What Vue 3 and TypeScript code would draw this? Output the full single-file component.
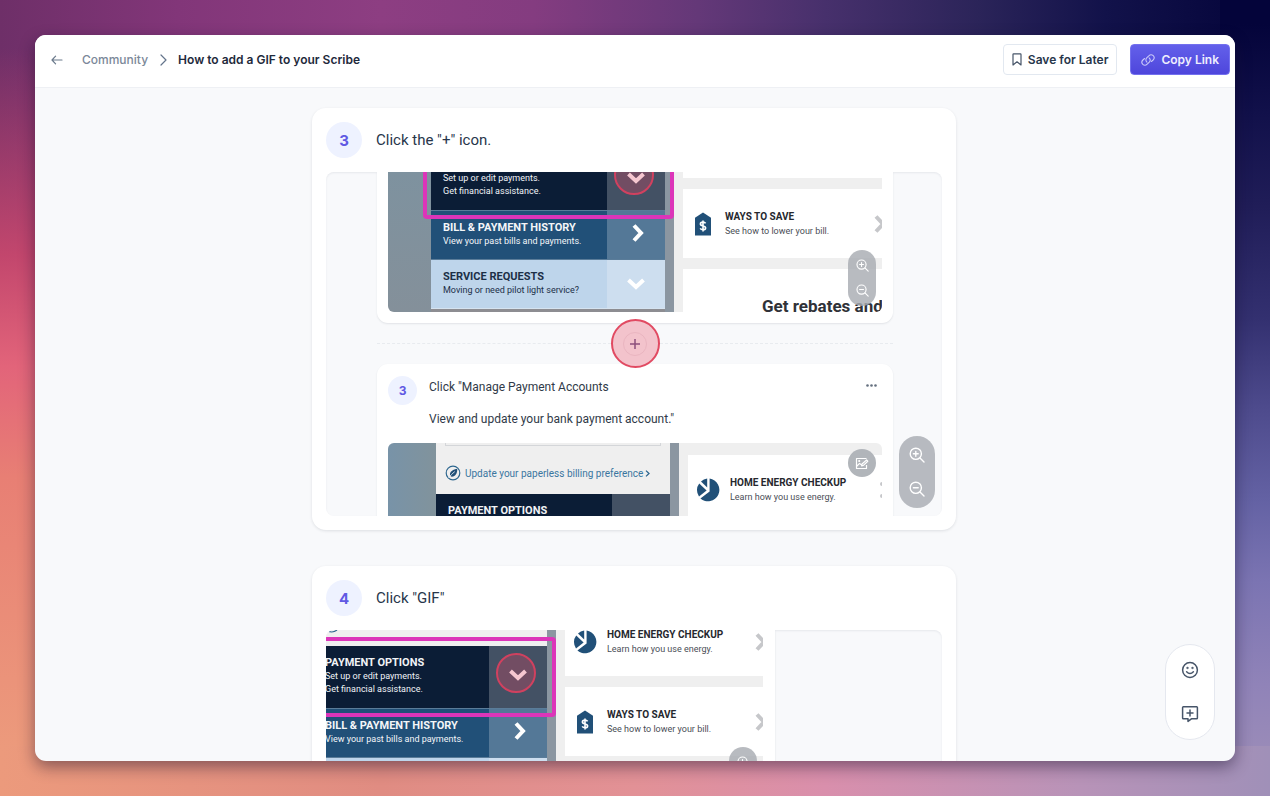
<script setup lang="ts">
interface MenuRow {
  kind: string
  title: string
  lines: string[]
  arrow: '' | 'down' | 'right'
}

interface Panel {
  icon: '' | 'pie' | 'tag'
  title: string
  text: string
}

const payment: MenuRow = {
  kind: 'payment',
  title: 'PAYMENT OPTIONS',
  lines: ['Set up or edit payments.', 'Get financial assistance.'],
  arrow: 'down',
}
const history: MenuRow = {
  kind: 'history',
  title: 'BILL & PAYMENT HISTORY',
  lines: ['View your past bills and payments.'],
  arrow: 'right',
}
const service: MenuRow = {
  kind: 'service',
  title: 'SERVICE REQUESTS',
  lines: ['Moving or need pilot light service?'],
  arrow: 'down',
}
const lowRows: MenuRow[] = [{ ...payment, title: '' }, history, service]
const midRows: MenuRow[] = [payment, history, { ...service, title: '', lines: [], arrow: '' }]

const home: Panel = { icon: 'pie', title: 'HOME ENERGY CHECKUP', text: 'Learn how you use energy.' }
const ways: Panel = { icon: 'tag', title: 'WAYS TO SAVE', text: 'See how to lower your bill.' }
</script>

<template>
  <div class="desktop">
    <div class="window">
      <svg class="defs" aria-hidden="true">
        <symbol id="zoom-in" viewBox="0 0 16 16">
          <g fill="none" stroke="currentColor" stroke-width="1.4" stroke-linecap="round">
            <circle cx="6.8" cy="6.8" r="5.6" />
            <path d="M11 11l4 4M4.4 6.8h4.8M6.8 4.4v4.8" />
          </g>
        </symbol>
        <symbol id="zoom-out" viewBox="0 0 16 16">
          <g fill="none" stroke="currentColor" stroke-width="1.4" stroke-linecap="round">
            <circle cx="6.8" cy="6.8" r="5.6" />
            <path d="M11 11l4 4M4.4 6.8h4.8" />
          </g>
        </symbol>
        <symbol id="pie" viewBox="0 0 24 24">
          <g fill="#215078">
            <path d="M13.6 .6A11.4 11.4 0 1 1 4.4 20.4L13.6 13.6z" />
            <path d="M11.2 9.6L5 3.6A11 11 0 0 1 11.2 .6z" />
            <path d="M3.2 5.4L10.6 12.4L3 18.4A11 11 0 0 1 3.2 5.4z" />
          </g>
        </symbol>
        <symbol id="tag" viewBox="0 0 24 24">
          <path d="M12 0.5L20 5.8V23.4H4V5.8z" fill="#215078" />
          <path d="M14.6 11.4C14.1 10.5 13.1 10.1 12 10.1C10.4 10.1 9.4 10.9 9.4 12C9.4 14.6 14.6 13.2 14.6 15.9C14.6 17.1 13.4 17.8 12 17.8C10.8 17.8 9.8 17.4 9.2 16.4M12 8.4V19.6" fill="none" stroke="#fff" stroke-width="1.6" />
        </symbol>
        <symbol id="down" viewBox="0 0 18 12">
          <path d="M1.5 2L9 9L16.5 2" fill="none" stroke="currentColor" stroke-width="4" />
        </symbol>
        <symbol id="right" viewBox="0 0 12 18">
          <path d="M2 1.5L9 9L2 16.5" fill="none" stroke="currentColor" stroke-width="4" />
        </symbol>
      </svg>

      <header class="bar">
        <nav class="crumbs" aria-label="Breadcrumb">
          <button class="back" type="button" aria-label="Back">
            <svg width="12" height="10" viewBox="0 0 12 10" fill="none" stroke="#6b7a8c" stroke-width="1.2" stroke-linecap="round" stroke-linejoin="round">
              <path d="M11 5H1M4.6 1.2L1 5l3.6 3.8" />
            </svg>
          </button>
          <a class="parent" href="#community">Community</a>
          <svg class="sep" width="7" height="12" viewBox="0 0 7 12" fill="none" stroke="#64748b" stroke-width="1.2" stroke-linecap="round" stroke-linejoin="round">
            <path d="M1 1l5 5-5 5" />
          </svg>
          <h1 class="title">How to add a GIF to your Scribe</h1>
        </nav>
        <div class="actions">
          <button class="action save" type="button">
            <svg width="10" height="13" viewBox="0 0 10 13" fill="none" stroke="#475569" stroke-width="1.2" stroke-linejoin="round">
              <path d="M1 1.2Q1 .8 1.6 .8H8.4Q9 .8 9 1.4V12L5 8.8L1 12z" />
            </svg>
            Save for Later
          </button>
          <button class="action copy" type="button">
            <svg width="14" height="12" viewBox="0 0 14 12" fill="none" stroke="#c9c8f8" stroke-width="1.1" stroke-linecap="round">
              <path d="M5.9 8.2C4.6 7 4.5 5.2 5.7 3.9L7.8 1.9C9.1.6 11 .6 12.2 1.7C13.4 2.9 13.4 4.7 12.1 6L10.4 7.5" />
              <path d="M8.1 3.8C9.4 5 9.5 6.8 8.3 8.1L6.2 10.1C4.9 11.4 3 11.4 1.8 10.3C.6 9.1.6 7.3 1.9 6L3.6 4.5" />
            </svg>
            Copy Link
          </button>
        </div>
      </header>

      <main class="content">
        <article class="card">
          <div class="step">
            <span class="number">3</span>
            <p class="label">Click the "+" icon.</p>
          </div>

          <div class="shot first">
            <section class="inner top">
              <div class="scene low">
                <div class="side"></div>
                <div class="menu">
                  <div v-for="row in lowRows" :key="row.kind" class="row" :class="[row.kind, { cut: !row.title }]">
                    <div class="words">
                      <strong v-if="row.title">{{ row.title }}</strong>
                      <span v-for="line in row.lines" :key="line">{{ line }}</span>
                    </div>
                    <div class="arrow" :class="row.arrow">
                      <svg><use :href="'#' + row.arrow" /></svg>
                      <i v-if="row.kind === 'payment'" class="target"></i>
                    </div>
                    <i v-if="row.kind === 'payment'" class="frame"></i>
                  </div>
                </div>
                <div class="edge"></div>
                <div class="panels">
                  <div class="panel sliver"></div>
                  <div class="panel">
                    <svg class="mark"><use href="#tag" /></svg>
                    <div class="facts">
                      <strong>{{ ways.title }}</strong>
                      <span>{{ ways.text }}</span>
                    </div>
                    <svg class="next"><use href="#right" /></svg>
                  </div>
                  <div class="rebates">Get rebates and</div>
                </div>
                <div class="pill small">
                  <button type="button" aria-label="Zoom in picture"><svg><use href="#zoom-in" /></svg></button>
                  <button type="button" aria-label="Zoom out picture"><svg><use href="#zoom-out" /></svg></button>
                </div>
              </div>
            </section>

            <div class="divider">
              <button class="add" type="button" aria-label="Add step">
                <svg width="26" height="26" viewBox="0 0 26 26" fill="none">
                  <circle cx="13" cy="13" r="11.5" stroke="#eab5c0" stroke-width="1" />
                  <path d="M8 13h10M13 8v10" stroke="#8d4f7c" stroke-width="1.5" />
                </svg>
              </button>
            </div>

            <section class="inner bottom">
              <div class="substep">
                <span class="number little">3</span>
                <div class="text">
                  <p>Click "Manage Payment Accounts</p>
                  <p>View and update your bank payment account."</p>
                </div>
                <button class="more" type="button" aria-label="More">
                  <svg width="11" height="3" viewBox="0 0 11 3" fill="#64707f">
                    <circle cx="1.5" cy="1.5" r="1.3" /><circle cx="5.5" cy="1.5" r="1.3" /><circle cx="9.5" cy="1.5" r="1.3" />
                  </svg>
                </button>
              </div>
              <div class="scene high">
                <div class="side"></div>
                <div class="menu">
                  <div class="paperless">
                    <div class="box"></div>
                    <a href="#paperless">
                      <svg width="16" height="16" viewBox="0 0 16 16">
                        <circle cx="8" cy="8" r="6.8" fill="none" stroke="#2e678f" stroke-width="1.2" />
                        <path d="M12.2 3.8C12.4 8.6 10.4 12 6 11.6C3.2 9 6 4.6 12.2 3.8z" fill="#215078" />
                        <path d="M3.6 13C5.2 10.8 7.2 8.6 9.8 6.6" fill="none" stroke="#dfe6ec" stroke-width=".9" />
                      </svg>
                      <span>Update your paperless billing preference</span>
                      <svg class="go" width="5" height="7" viewBox="0 0 5 7" fill="none" stroke="#2e678f" stroke-width="1.3"><path d="M1 .6L4 3.5L1 6.4" /></svg>
                    </a>
                  </div>
                  <div class="row payment last">
                    <div class="words"><strong>{{ payment.title }}</strong></div>
                    <div class="arrow"></div>
                  </div>
                </div>
                <div class="edge"></div>
                <div class="panels">
                  <div class="panel">
                    <svg class="mark"><use href="#pie" /></svg>
                    <div class="facts">
                      <strong>{{ home.title }}</strong>
                      <span>{{ home.text }}</span>
                    </div>
                    <svg class="hint" width="3" height="18" viewBox="0 0 3 18" fill="#c6c7ca">
                      <circle cx="3" cy="3" r="2" /><circle cx="3" cy="15" r="2" />
                    </svg>
                  </div>
                </div>
                <button class="edit" type="button" aria-label="Edit picture">
                  <svg width="14" height="13" viewBox="0 0 14 13" fill="none" stroke="#fff" stroke-width="1.2" stroke-linejoin="round">
                    <path d="M11.5 1.5H1.5V11.5H11.5V8M2 9L4.6 6.4L7 8.2" />
                    <path d="M6.6 8.8L7 7L11.6 3L12.8 4.2L8.4 8.4z" />
                    <circle cx="4.2" cy="4" r=".5" />
                  </svg>
                </button>
              </div>
            </section>

            <div class="pill large">
              <button type="button" aria-label="Zoom in"><svg><use href="#zoom-in" /></svg></button>
              <button type="button" aria-label="Zoom out"><svg><use href="#zoom-out" /></svg></button>
            </div>
          </div>
        </article>

        <article class="card">
          <div class="step">
            <span class="number">4</span>
            <p class="label">Click "GIF"</p>
          </div>

          <div class="shot second">
            <section class="inner wide">
              <div class="scene mid">
                <div class="menu">
                  <div class="strip">
                    <svg width="12" height="4" viewBox="0 0 12 4"><path d="M0 0Q6 4 11 0" fill="none" stroke="#2e678f" stroke-width="1.2" /></svg>
                  </div>
                  <div v-for="row in midRows" :key="row.kind" class="row" :class="row.kind">
                    <div class="words">
                      <strong v-if="row.title">{{ row.title }}</strong>
                      <span v-for="line in row.lines" :key="line">{{ line }}</span>
                    </div>
                    <div class="arrow" :class="row.arrow">
                      <svg v-if="row.arrow"><use :href="'#' + row.arrow" /></svg>
                      <i v-if="row.kind === 'payment'" class="target"></i>
                    </div>
                    <i v-if="row.kind === 'payment'" class="frame"></i>
                  </div>
                </div>
                <div class="edge"></div>
                <div class="panels">
                  <div v-for="panel in [home, ways]" :key="panel.icon" class="panel">
                    <svg class="mark"><use :href="'#' + panel.icon" /></svg>
                    <div class="facts">
                      <strong>{{ panel.title }}</strong>
                      <span>{{ panel.text }}</span>
                    </div>
                    <svg class="next"><use href="#right" /></svg>
                  </div>
                </div>
                <div class="pill small">
                  <button type="button" aria-label="Zoom in picture"><svg><use href="#zoom-in" /></svg></button>
                </div>
              </div>
            </section>
          </div>
        </article>
      </main>

      <aside class="feedback">
        <button type="button" aria-label="React">
          <svg width="18" height="18" viewBox="0 0 18 18" fill="none" stroke="#475569" stroke-width="1.5" stroke-linecap="round">
            <circle cx="9" cy="9" r="7.4" />
            <path d="M5.6 10.8Q9 14.4 12.4 10.8" />
            <circle cx="6.5" cy="7" r=".4" /><circle cx="11.5" cy="7" r=".4" />
          </svg>
        </button>
        <button type="button" aria-label="Comment">
          <svg width="18" height="18" viewBox="0 0 18 18" fill="none" stroke="#475569" stroke-width="1.5" stroke-linecap="round" stroke-linejoin="round">
            <path d="M2.4 1.8H15.6Q16.4 1.8 16.4 2.6V13Q16.4 13.8 15.6 13.8H10.4L7 16.4V13.8H2.4Q1.6 13.8 1.6 13V2.6Q1.6 1.8 2.4 1.8z" />
            <path d="M6 8h6M9 5v6" />
          </svg>
        </button>
      </aside>
    </div>
  </div>
</template>

<style>
body {
  margin: 0;
}
</style>

<style scoped>
* {
  box-sizing: border-box;
}
button {
  margin: 0;
  padding: 0;
  border: 0;
  background: none;
  font: inherit;
  color: inherit;
  display: flex;
  align-items: center;
  justify-content: center;
}
p,
h1 {
  margin: 0;
}
.defs {
  display: none;
}
.desktop {
  height: 100vh;
  padding: 35px;
  font-family: Inter, "Liberation Sans", sans-serif;
  background:
    linear-gradient(to right, #ec9a7c, #e08c82 30%, #e29196 50%, #d98fac 65%, #b893b8 85%, #a090b8) bottom / 100% 50px no-repeat,
    linear-gradient(to bottom, transparent 6%, rgba(215, 76, 110, 0.8) 32%, #e2647a 46%, #e87f74 60%, #ec9a7c 94%) left / 50px 100% no-repeat,
    linear-gradient(to bottom, #04043a 3%, #11104a 14%, #201d58 26%, #333070 40%, #4d4a8c 51%, #6462a4 63%, #7b74b2 73%, #9083b8 86%, #a090b8) right / 50px 100% no-repeat,
    linear-gradient(to right, #6e2f68, #823679 14%, #8d3e82 30%, #843c80 42%, #643878 55%, #47306c 65%, #2b2459 77%, #12124a 87%, #04043a);
}
.window {
  position: relative;
  display: flex;
  flex-direction: column;
  height: 100%;
  overflow: hidden;
  border-radius: 11px;
  background: #f8f9fb;
  box-shadow: 0 6px 16px rgba(20, 10, 40, 0.45);
}
.bar {
  flex: none;
  display: flex;
  justify-content: space-between;
  height: 53px;
  padding: 9px 5px 0 16px;
  background: #fff;
  border-bottom: 1px solid #eef0f4;
}
.crumbs {
  display: flex;
  align-items: center;
  height: 31px;
  font-size: 12px;
}
.back {
  width: 12px;
  margin-right: 19px;
}
.parent {
  font-weight: 500;
  color: #7b8899;
  text-decoration: none;
}
.sep {
  margin: 0 11px 0 12px;
}
.title {
  font-size: 12px;
  font-weight: 600;
  color: #1e293b;
}
.actions {
  display: flex;
  gap: 13px;
}
.action {
  height: 31px;
  gap: 6px;
  border: 1px solid #e2e8f0;
  border-radius: 4px;
  padding: 0 8px;
  font-size: 12px;
  font-weight: 600;
  color: #27364b;
  background: #fff;
}
.copy {
  padding: 0 10px;
  border-color: #7370ee;
  color: #eeeefe;
  background: linear-gradient(#6360ea, #4e46dc);
}
.content {
  flex: 1;
  min-height: 0;
  overflow: hidden;
  display: flex;
  flex-direction: column;
  align-items: center;
  gap: 36px;
  padding: 20px 2px 0 0;
}
.card {
  flex: none;
  width: 100%;
  max-width: 644px;
  padding: 14px;
  border-radius: 14px;
  background: #fff;
  box-shadow: 0 1px 3px rgba(30, 41, 59, 0.12);
}
.step {
  display: flex;
  align-items: center;
  gap: 14px;
  height: 36px;
  margin-bottom: 14px;
}
.number {
  flex: none;
  display: flex;
  align-items: center;
  justify-content: center;
  width: 36px;
  height: 36px;
  border-radius: 50%;
  background: #eef2ff;
  color: #6159e3;
  font-size: 15px;
  font-weight: 700;
}
.label {
  font-family: Roboto, "Liberation Sans", sans-serif;
  font-size: 15px;
  color: #27364b;
}
.shot {
  position: relative;
  height: 344px;
  overflow: hidden;
  border-radius: 8px;
  background: #f8f9fb;
  box-shadow: inset 0 1px 2px rgba(30, 41, 59, 0.08);
}
.first {
  padding: 0 49px 0 51px;
}
.inner {
  background: #fff;
  padding: 0 11px;
  box-shadow: 0 1px 2px rgba(30, 41, 59, 0.1);
}
.top {
  padding-bottom: 11px;
  border-radius: 0 0 11px 11px;
}
.bottom {
  border-radius: 11px 11px 0 0;
}
.scene {
  position: relative;
  display: flex;
  overflow: hidden;
  font-family: Roboto, "Liberation Sans", sans-serif;
  background: #efefef;
}
.low {
  height: 140px;
  border-radius: 0 0 6px 6px;
}
.high {
  height: 73px;
  border-radius: 6px 6px 0 0;
}
.mid {
  height: 131px;
}
.side {
  flex: none;
  width: 43px;
  background: linear-gradient(#7e929f, #84909a);
}
.high .side {
  width: 48px;
  background: linear-gradient(to right, #7893a8, #81939c);
}
.menu {
  flex: none;
  width: 234px;
}
.low .menu {
  background: #8d8d92;
}
.edge {
  flex: none;
  width: 9px;
  background: #8b96a1;
}
.row {
  position: relative;
  display: flex;
  height: 49px;
  border-bottom: 1px solid #5a7c99;
}
.payment {
  height: 63px;
  background: #0b1d36;
  color: #f1f3f6;
}
.payment.cut {
  height: 39px;
}
.payment.last {
  height: 22px;
  border: 0;
}
.history {
  background: #215078;
  color: #f4f6f8;
}
.service {
  background: #bed5eb;
  color: #1c2f47;
  border-color: #d5e3f0;
}
.words {
  flex: 1;
  padding: 10px 0 0 12px;
  white-space: nowrap;
}
.cut .words {
  padding-top: 0;
}
.words strong,
.words span,
.facts strong,
.facts span {
  display: block;
}
.words strong {
  font-size: 11px;
  line-height: 14px;
  font-weight: 700;
}
.words span {
  font-size: 9px;
  line-height: 13px;
}
.arrow {
  position: relative;
  width: 58px;
  display: flex;
  align-items: center;
  justify-content: center;
  color: #fff;
  background: rgba(255, 255, 255, 0.23);
}
.arrow svg {
  width: 18px;
  height: 12px;
}
.arrow.right {
  padding: 0 0 4px 4px;
}
.arrow.right svg {
  width: 12px;
  height: 18px;
}
.payment .arrow {
  padding-bottom: 4px;
}
.payment.cut .arrow {
  align-items: flex-start;
}
.target {
  position: absolute;
  left: 7px;
  top: 7px;
  width: 40px;
  height: 40px;
  border: 2px solid #d0415f;
  border-radius: 50%;
  background: rgba(225, 70, 100, 0.3);
}
.cut .target {
  top: -17px;
}
.frame {
  position: absolute;
  z-index: 1;
  inset: -9px -9px -9px -8px;
  border: 4px solid #dc35b9;
  border-radius: 4px;
}
.panels {
  flex: 1;
  min-width: 0;
  padding-left: 9px;
  overflow: hidden;
}
.panel {
  display: flex;
  align-items: center;
  height: 69px;
  margin-bottom: 11px;
  padding-left: 8px;
  background: #fff;
}
.sliver {
  height: 6px;
}
.mark {
  flex: none;
  width: 24px;
  height: 24px;
}
.facts {
  flex: 1;
  padding-left: 10px;
  white-space: nowrap;
  color: #4a4e56;
}
.facts strong {
  font-size: 10px;
  line-height: 14px;
  font-weight: 700;
  color: #26282e;
}
.facts span {
  font-size: 9px;
  line-height: 14px;
}
.next {
  flex: none;
  width: 12px;
  height: 18px;
  margin-right: -4px;
  color: #c6c7ca;
}
.hint {
  flex: none;
}
.rebates {
  height: 43px;
  padding: 25px 0 0 79px;
  font-size: 17px;
  line-height: 24px;
  font-weight: 700;
  white-space: nowrap;
  color: #303238;
  background: #fff;
}
.pill {
  position: absolute;
  display: flex;
  flex-direction: column;
  align-items: center;
  color: #fff;
  background: rgba(168, 172, 178, 0.82);
}
.small {
  right: 6px;
  width: 28px;
  gap: 12px;
  padding: 9px 0;
  border-radius: 14px;
}
.small svg {
  width: 13px;
  height: 13px;
}
.low .small {
  bottom: 6px;
}
.large {
  right: 7px;
  bottom: 8px;
  width: 36px;
  gap: 18px;
  padding: 11px 0;
  border-radius: 18px;
}
.large svg {
  width: 16px;
  height: 16px;
}
.divider {
  position: relative;
  height: 41px;
  display: flex;
  justify-content: center;
  align-items: center;
}
.divider::before,
.divider::after {
  content: "";
  flex: 1;
  border-top: 1px dashed #e8ebef;
}
.add {
  flex: none;
  position: relative;
  z-index: 2;
  width: 49px;
  height: 49px;
  margin: -4px 0;
  border: 2px solid #e14a62;
  border-radius: 50%;
  background: #f3c3cc;
}
.substep {
  display: flex;
  height: 79px;
  padding: 12px 0 0;
}
.little {
  width: 29px;
  height: 29px;
  font-size: 12px;
}
.text {
  flex: 1;
  padding-left: 12px;
  font-family: Roboto, "Liberation Sans", sans-serif;
  font-size: 12px;
  line-height: 22px;
  color: #303a48;
}
.text p + p {
  margin-top: 10px;
}
.more {
  width: 12px;
  height: 18px;
  margin-right: 5px;
}
.paperless {
  height: 51px;
  padding: 0 9px;
  background: #efefef;
}
.box {
  height: 3px;
  border: 1px solid #d4d6d9;
  border-top: 0;
}
.paperless a {
  display: flex;
  align-items: center;
  gap: 4px;
  height: 54px;
  font-size: 10px;
  white-space: nowrap;
  color: #3a76a0;
  text-decoration: none;
}
.go {
  margin-left: -2px;
}
.high .panels {
  padding-top: 12px;
}
.edit {
  position: absolute;
  right: 6px;
  top: 6px;
  width: 28px;
  height: 28px;
  border-radius: 50%;
  background: #b1b5ba;
}
.wide {
  width: 449px;
  padding: 0 12px 0 0;
}
.mid .menu {
  margin-left: -13px;
}
.strip {
  height: 16px;
  padding-left: 13px;
}
.strip svg {
  display: block;
}
.mid .panels {
  margin-top: -23px;
}
.mid .small {
  top: 117px;
}
.feedback {
  position: absolute;
  right: 20px;
  bottom: 21px;
  width: 50px;
  display: flex;
  flex-direction: column;
  align-items: center;
  gap: 26px;
  padding: 16px 0;
  border: 1px solid #e5e8ef;
  border-radius: 25px;
  background: #fff;
}
</style>
